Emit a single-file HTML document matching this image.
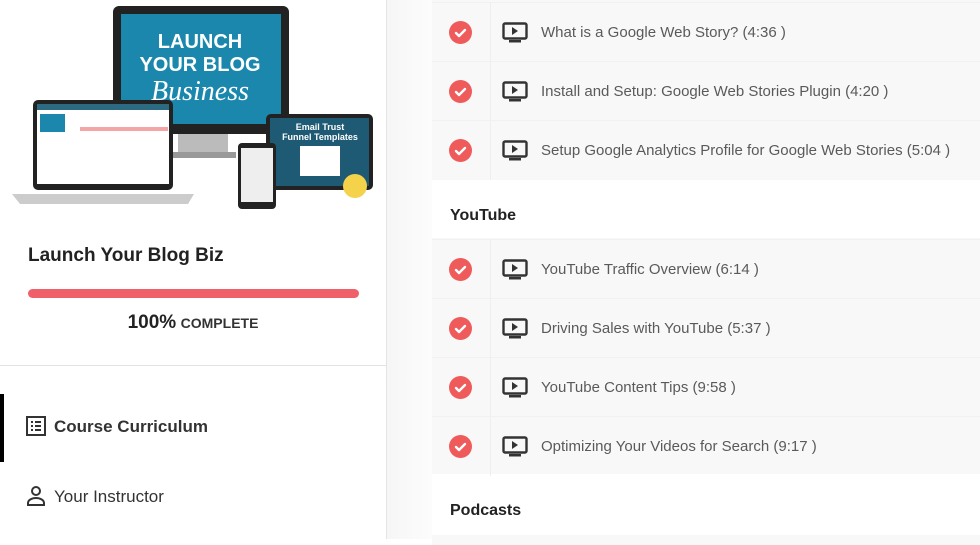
<!DOCTYPE html>
<html><head><meta charset="utf-8"><style>
*{margin:0;padding:0;box-sizing:border-box}
body{width:980px;height:539px;overflow:hidden;background:#fff;font-family:"Liberation Sans",sans-serif;position:relative}
.left{position:absolute;left:0;top:0;width:387px;height:539px;background:#fff;border-right:1px solid #e4e4e4}
.gap{position:absolute;left:387px;top:0;width:45px;height:539px;background:linear-gradient(90deg,#f6f6f6,#fcfcfc)}
.main{position:absolute;left:432px;top:0;width:548px;height:539px;background:#fff}
.block{position:absolute;left:0;width:548px;background:#f8f8f8}
.row{position:absolute;left:0;width:548px;height:59px;border-top:1px solid #f1f1f1}
.chk{position:absolute;left:17px;top:18px;width:23px;height:23px;border-radius:50%;background:#ef5b5b}
.vd{position:absolute;left:58px;top:0;width:1px;height:59px;background:#eee}
.ic{position:absolute;left:70px;top:19px}
.t{position:absolute;left:109px;top:21px;font-size:15px;color:#5a5a5a;white-space:nowrap}
.h{position:absolute;left:18px;font-size:16px;font-weight:bold;color:#222}
</style></head><body>
<div class="left">
<svg width="387" height="215" style="position:absolute;left:0;top:0">
 <rect x="113" y="6" width="176" height="128" rx="6" fill="#222"/>
 <rect x="121" y="14" width="160" height="110" fill="#1b87ad"/>
 <text x="200" y="48" text-anchor="middle" fill="#fff" font-weight="bold" font-size="20" font-family="Liberation Sans">LAUNCH</text>
 <text x="200" y="71" text-anchor="middle" fill="#fff" font-weight="bold" font-size="20" font-family="Liberation Sans">YOUR BLOG</text>
 <text x="200" y="100" text-anchor="middle" fill="#fff" font-style="italic" font-size="28" font-family="Liberation Serif">Business</text>
 <rect x="178" y="134" width="50" height="20" fill="#bbb"/>
 <rect x="170" y="152" width="66" height="6" fill="#999"/>
 <rect x="33" y="100" width="140" height="90" rx="5" fill="#222"/>
 <rect x="37" y="110" width="132" height="74" fill="#fff"/>
 <rect x="37" y="104" width="132" height="6" fill="#2b6a80"/>
 <rect x="40" y="114" width="25" height="18" fill="#1b87ad"/>
 <rect x="80" y="127" width="88" height="4" fill="#f3a5a5"/>
 <path d="M12 194h182l-6 10H20z" fill="#ccc"/>
 <rect x="266" y="114" width="107" height="76" rx="5" fill="#222"/>
 <rect x="270" y="118" width="99" height="68" fill="#1f5a75"/>
 <text x="320" y="130" text-anchor="middle" fill="#fff" font-weight="bold" font-size="9" font-family="Liberation Sans">Email Trust</text>
 <text x="320" y="140" text-anchor="middle" fill="#fff" font-weight="bold" font-size="9" font-family="Liberation Sans">Funnel Templates</text>
 <rect x="300" y="146" width="40" height="30" fill="#fff"/>
 <circle cx="355" cy="186" r="12" fill="#f4d34a"/>
 <rect x="238" y="143" width="38" height="66" rx="4" fill="#222"/>
 <rect x="241" y="148" width="32" height="54" fill="#eee"/>
</svg>
<div style="position:absolute;left:28px;top:245px;font-size:19px;font-weight:bold;color:#222">Launch Your Blog Biz</div>
<div style="position:absolute;left:28px;top:289px;width:331px;height:9px;border-radius:5px;background:#f0606a"></div>
<div style="position:absolute;left:0;width:386px;top:312px;text-align:center;color:#222"><b style="font-size:19px">100%</b> <span style="font-size:14px;font-weight:bold;color:#333">COMPLETE</span></div>
<div style="position:absolute;left:0;top:365px;width:386px;height:1px;background:#e2e2e2"></div>
<div style="position:absolute;left:0;top:394px;width:4px;height:68px;background:#000"></div>
<svg width="20" height="20" style="position:absolute;left:26px;top:416px" fill="none" stroke="#333" stroke-width="2"><rect x="1" y="1" width="18" height="18"/><path d="M5 6h2M5 10h2M5 14h2M9 6h6M9 10h6M9 14h6"/></svg>
<div style="position:absolute;left:54px;top:417px;font-size:17px;font-weight:bold;color:#333">Course Curriculum</div>
<svg width="20" height="20" style="position:absolute;left:26px;top:486px" fill="none" stroke="#333" stroke-width="2"><circle cx="10" cy="5" r="4"/><path d="M2 19v-2c0-3 4-5 8-5s8 2 8 5v2z"/></svg>
<div style="position:absolute;left:54px;top:487px;font-size:17px;color:#333">Your Instructor</div>
</div>
<div class="gap"></div>
<div class="main">
<div class="block" style="top:0;height:180px">
 <div class="row" style="top:2px"><div class="chk"></div><div class="vd"></div><div class="ic"></div><div class="t">What is a Google Web Story? (4:36 )</div></div>
 <div class="row" style="top:61px"><div class="chk"></div><div class="vd"></div><div class="ic"></div><div class="t">Install and Setup: Google Web Stories Plugin (4:20 )</div></div>
 <div class="row" style="top:120px"><div class="chk"></div><div class="vd"></div><div class="ic"></div><div class="t">Setup Google Analytics Profile for Google Web Stories (5:04 )</div></div>
</div>
<div class="h" style="top:207px">YouTube</div>
<div class="block" style="top:238px;height:236px">
 <div class="row" style="top:1px"><div class="chk"></div><div class="vd"></div><div class="ic"></div><div class="t">YouTube Traffic Overview (6:14 )</div></div>
 <div class="row" style="top:60px"><div class="chk"></div><div class="vd"></div><div class="ic"></div><div class="t">Driving Sales with YouTube (5:37 )</div></div>
 <div class="row" style="top:119px"><div class="chk"></div><div class="vd"></div><div class="ic"></div><div class="t">YouTube Content Tips (9:58 )</div></div>
 <div class="row" style="top:178px"><div class="chk"></div><div class="vd"></div><div class="ic"></div><div class="t">Optimizing Your Videos for Search (9:17 )</div></div>
</div>
<div class="h" style="top:502px">Podcasts</div>
<div class="block" style="top:535px;height:10px"></div>
</div>
<script>
document.querySelectorAll('.chk').forEach(e=>e.innerHTML='<svg width="23" height="23"><path d="M7 12l3 3 6-6" fill="none" stroke="#fff" stroke-width="2.4" stroke-linecap="round" stroke-linejoin="round"/></svg>');
document.querySelectorAll('.ic').forEach(e=>e.innerHTML='<svg width="26" height="22"><rect x="1.5" y="1.5" width="23" height="15" rx="1.5" fill="none" stroke="#333" stroke-width="2.4"/><path d="M10 5l6 4-6 4z" fill="#333"/><rect x="7" y="18" width="12" height="2.5" fill="#333"/></svg>');
</script>
</body></html>
